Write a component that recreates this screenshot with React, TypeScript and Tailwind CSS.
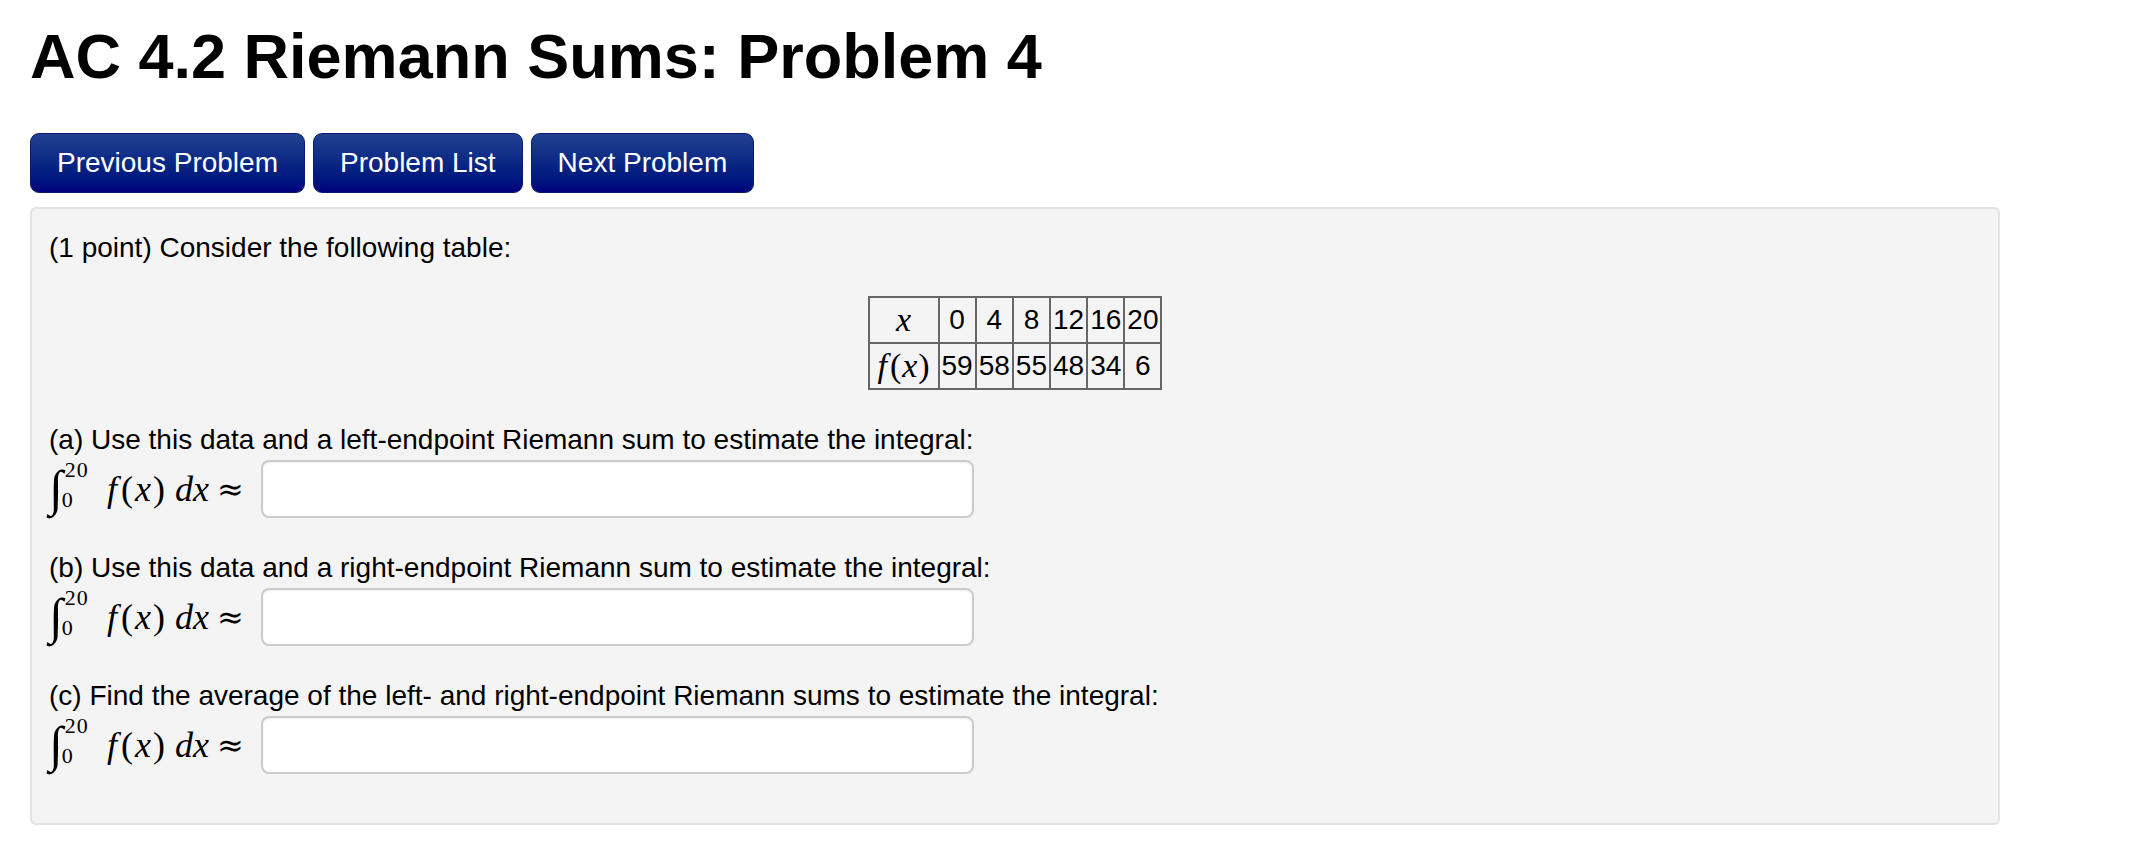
import React from "react";

// ---------------------------------------------------------
// Small math pieces (MathJax look-alike)
// ---------------------------------------------------------
const serif = "font-['Liberation_Serif','Times_New_Roman',serif]";

function Integral() {
  return (
    <span className={`inline-flex items-center ${serif} text-black`}>
      <span className="inline-flex h-[58px] w-[58px] items-center">
        <span className="-mt-[2px] text-[50px] italic leading-none">∫</span>
        <span className="ml-[2px] inline-flex flex-col text-[22px] leading-[20px] tracking-[1px]">
          <span className="-mt-[8px]">20</span>
          <span className="mt-[10px] -ml-[3px]">0</span>
        </span>
      </span>
      <span className="text-[36px] leading-none">
        <i className="mr-[4px]">f</i>(<i className="px-[2px]">x</i>)
      </span>
      <span className="ml-[10px] text-[36px] leading-none">
        <i>d</i>
        <i>x</i>
      </span>
      <span className="ml-[8px] font-['DejaVu_Serif',serif] text-[32px] leading-none">≈</span>
    </span>
  );
}

function AnswerRow({ label }: { label: string }) {
  return (
    <div className="flex flex-col">
      <p className="leading-[40px]">{label}</p>
      <div className="flex items-center">
        <Integral />
        <input
          type="text"
          className="ml-[17px] h-[58px] w-[713px] rounded-[8px] border-2 border-[#cbcbcb] bg-white px-3 text-[28px] shadow-[inset_0_1px_2px_rgba(0,0,0,0.08)] outline-none"
        />
      </div>
    </div>
  );
}

// ---------------------------------------------------------
// Page
// ---------------------------------------------------------
export default function App() {
  const xs = ["0", "4", "8", "12", "16", "20"];
  const fs = ["59", "58", "55", "48", "34", "6"];
  const buttons = ["Previous Problem", "Problem List", "Next Problem"];

  return (
    <div className="min-h-screen bg-white px-[30px] font-['Liberation_Sans',Arial,sans-serif] text-black">
      <h1 className="pt-[25px] text-[63px] font-bold leading-[63px]">
        AC 4.2 Riemann Sums: Problem 4
      </h1>

      <div className="mt-[45px] flex gap-[8px]">
        {buttons.map((b) => (
          <button
            key={b}
            className="h-[60px] rounded-[9px] border border-[#0b1b70] bg-gradient-to-b from-[#22408f] to-[#00007a] px-[26px] text-[28px] text-white"
          >
            {b}
          </button>
        ))}
      </div>

      <div className="mt-[14px] w-[1970px] rounded-[6px] border-2 border-[#e3e3e3] bg-[#f4f4f4] pb-[49px] pl-[17px] pr-[17px] pt-[19px] text-[28px]">
        <p className="leading-[40px]">(1 point) Consider the following table:</p>

        <table className="mx-auto mt-[28px] border-collapse border-2 border-[#666] text-[28px] leading-none">
          <tbody>
            <tr className="h-[46px]">
              <td className={`w-[70px] border-2 border-[#666] text-center ${serif} text-[34px] italic`}>x</td>
              {xs.map((v) => (
                <td key={v} className="min-w-[37px] border-2 border-[#666] px-[2px] text-center">
                  {v}
                </td>
              ))}
            </tr>
            <tr className="h-[46px]">
              <td className={`w-[70px] border-2 border-[#666] px-[2px] text-center ${serif} text-[34px]`}>
                <i className="mr-[3px]">f</i>(<i className="px-[1px]">x</i>)
              </td>
              {fs.map((v) => (
                <td key={v} className="min-w-[37px] border-2 border-[#666] px-[2px] text-center">
                  {v}
                </td>
              ))}
            </tr>
          </tbody>
        </table>

        <div className="mt-[30px] flex flex-col gap-[30px]">
          <AnswerRow label="(a) Use this data and a left-endpoint Riemann sum to estimate the integral:" />
          <AnswerRow label="(b) Use this data and a right-endpoint Riemann sum to estimate the integral:" />
          <AnswerRow label="(c) Find the average of the left- and right-endpoint Riemann sums to estimate the integral:" />
        </div>
      </div>
    </div>
  );
}
